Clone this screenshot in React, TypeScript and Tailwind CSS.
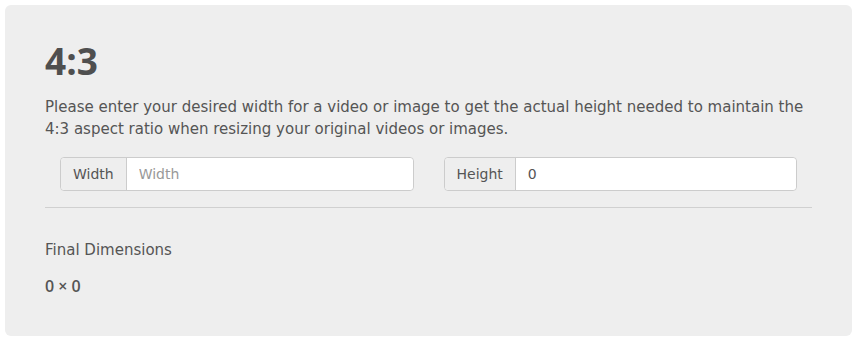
import React from "react";

const font = { fontFamily: '"DejaVu Sans", "Noto Sans", Arial, sans-serif' };
const headFont = { fontFamily: '"Open Sans", "Noto Sans", Arial, sans-serif' };

const InputGroup: React.FC<{ label: string; placeholder?: string; value?: string }> = ({ label, placeholder, value }) => {
    return (
        <div className="flex h-[34px] w-full rounded-[4px] border border-[#cccccc] bg-white">
            <span className="flex items-center rounded-l-[4px] border-r border-[#cccccc] bg-[#eeeeee] px-3 text-[14px] text-[#555555]">
                {label}
            </span>
            <input
                className="min-w-0 flex-1 rounded-r-[4px] bg-white px-3 text-[14px] text-[#555555] outline-none placeholder:text-[#999999]"
                placeholder={placeholder}
                defaultValue={value}
                style={font}
            />
        </div>
    );
};

export default function App() {
    return (
        <div className="h-[342px] w-[858px] bg-white p-[5px]" style={font}>
            <div className="h-[331px] w-[847px] rounded-[6px] bg-[#eeeeee] px-10 pt-[34px] text-[#555555]">
                <h1 className="text-[37px] font-bold leading-[44px] text-[#4f4f4f]" style={headFont}>
                    4:3
                </h1>
                <p className="mt-[13px] w-[767px] text-[15px] leading-[22px]">
                    Please enter your desired width for a video or image to get the actual height needed to maintain the 4:3 aspect ratio when resizing your original videos or images.
                </p>
                <div className="mt-[17px] grid w-[767px] grid-cols-2">
                    <div className="px-[15px]">
                        <InputGroup label="Width" placeholder="Width" />
                    </div>
                    <div className="px-[15px]">
                        <InputGroup label="Height" value="0" />
                    </div>
                </div>
                <hr className="mt-4 w-[767px] border-t border-[#d0d0d0]" />
                <p className="mt-[32px] text-[15px] leading-[20px]">Final Dimensions</p>
                <p className="mt-[16px] text-[16px] font-semibold leading-[20px]" style={headFont}>
                    0 × 0
                </p>
            </div>
        </div>
    );
}
